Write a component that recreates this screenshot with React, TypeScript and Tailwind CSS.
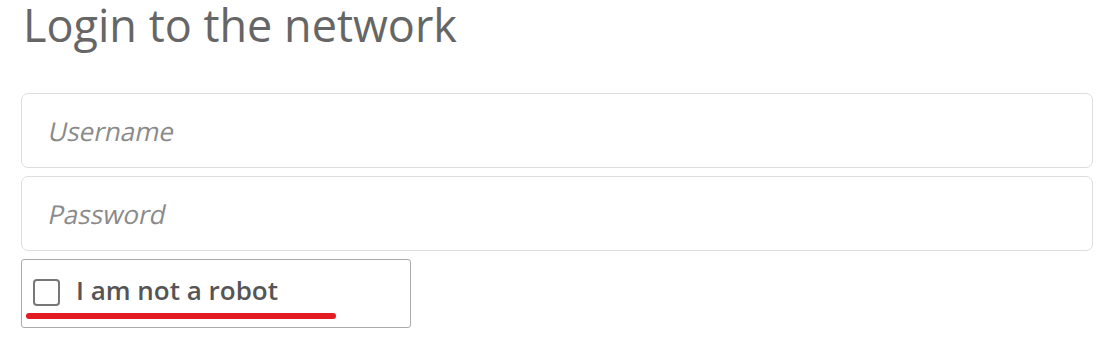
import React from "react";

function Field({ label }: { label: string }) {
  return (
    <div className="h-[75px] w-full rounded-[7px] border border-[#ddd] bg-white flex items-center px-[27px]">
      <span className="inline-block -skew-x-[12deg] text-[26px] text-[#8a8a8a] mt-[2px]">{label}</span>
    </div>
  );
}

export default function App() {
  return (
    <div className="w-[1102px] h-[340px] bg-white overflow-hidden" style={{ fontFamily: '"Open Sans", sans-serif' }}>
      <div className="pl-[21px] pr-[9px]">
        <h1 className="text-[45px] leading-[50px] text-[#666] font-normal pl-[2px]">Login to the network</h1>
        <div className="mt-[43px] flex flex-col gap-[8px]">
          <Field label="Username" />
          <Field label="Password" />
        </div>
        <div className="mt-[8px] w-[390px] h-[69px] rounded-[3px] border border-[#aaa] relative flex items-start pt-[16px] pl-[11px]">
          <span className="w-[27px] h-[27px] rounded-[4px] border-2 border-[#777] bg-white shrink-0 mt-[3px]"></span>
          <span className="ml-[16px] text-[26px] leading-[28px] font-semibold text-[#555]">I am not a robot</span>
          <span className="absolute left-[4px] top-[53px] w-[310px] h-[6px] rounded-full bg-[#e31b23]"></span>
        </div>
      </div>
    </div>
  );
}
